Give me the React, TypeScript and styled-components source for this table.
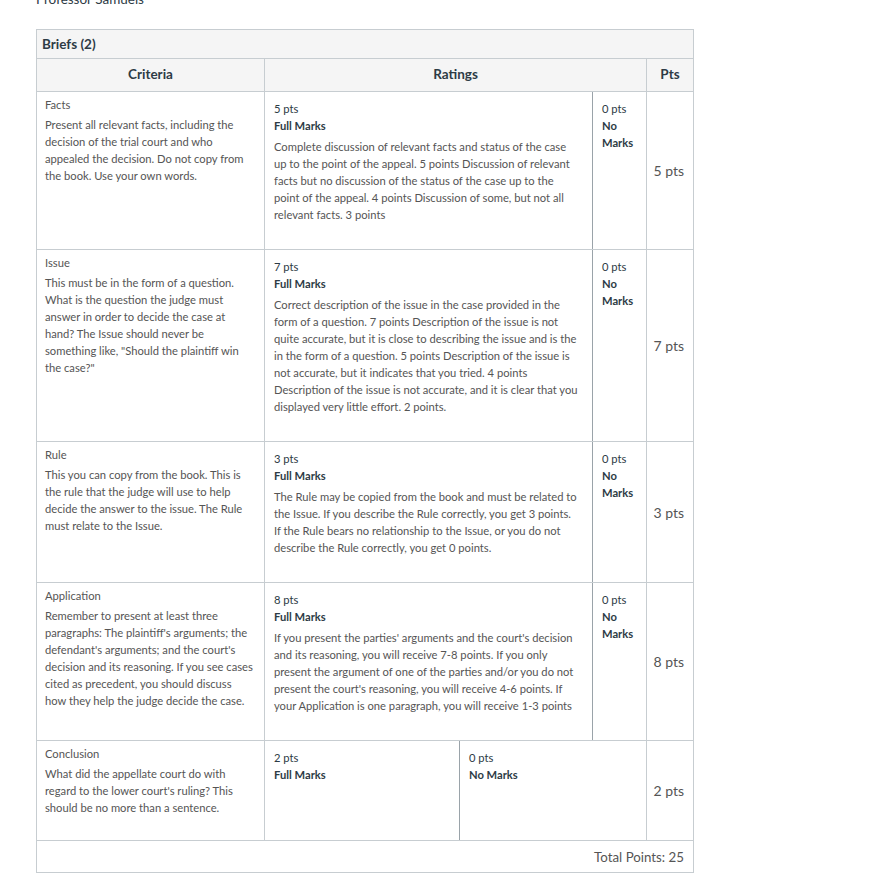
import React from "react";
import styled, { createGlobalStyle } from "styled-components";

const Global = createGlobalStyle`
  html, body { margin: 0; padding: 0; background: #ffffff; }
  body { font-family: "Lato", "Liberation Sans", sans-serif; overflow: hidden; }
`;

const Page = styled.div`
  padding: 0 0 0 36px;
  width: 658px;
`;

const Heading = styled.div`
  margin-top: -9px;
  font-size: 13.5px;
  line-height: 17px;
  color: #2d3b45;
  margin-bottom: 21px;
`;

const Rubric = styled.div`
  border: 1px solid #c7cdd1;
  width: 658px;
  box-sizing: border-box;
`;

const TitleBar = styled.div`
  height: 29px;
  box-sizing: border-box;
  background: #f5f5f5;
  border-bottom: 1px solid #c7cdd1;
  display: flex;
  align-items: center;
  padding-left: 5px;
  font-size: 13.5px;
  font-weight: 700;
  color: #2d3b45;
`;

const Row = styled.div`
  display: grid;
  grid-template-columns: 228px 382px 1fr;
  border-bottom: 1px solid #c7cdd1;
  &:last-child { border-bottom: none; }
`;

const HeadRow = styled(Row)`
  height: 33px;
  box-sizing: border-box;
  background: #f5f5f5;
`;

const HeadCell = styled.div<{ $last?: boolean }>`
  display: flex;
  align-items: center;
  justify-content: center;
  padding-bottom: 3px;
  font-size: 13.5px;
  font-weight: 700;
  color: #2d3b45;
  border-right: ${(p) => (p.$last ? "none" : "1px solid #c7cdd1")};
`;

const CriterionCell = styled.div`
  border-right: 1px solid #c7cdd1;
  padding: 4px 10px 24px 8px;
  font-size: 11.2px;
  line-height: 17px;
  color: #555555;
`;

const CriterionTitle = styled.div``;

const CriterionDesc = styled.div`
  margin-top: 3px;
`;

const RatingsCell = styled.div`
  border-right: 1px solid #c7cdd1;
  display: flex;
  align-items: stretch;
`;

const Tier = styled.div<{ $w: number; $divider?: boolean }>`
  box-sizing: border-box;
  flex: 0 0 ${(p) => p.$w}px;
  padding: 8px 13px 26px 9px;
  border-left: ${(p) => (p.$divider ? "1px solid #9aa3a9" : "none")};
  font-size: 11.2px;
  line-height: 17px;
`;

const TierPts = styled.div`
  color: #2d3b45;
`;

const TierLabel = styled.div`
  color: #2d3b45;
  font-weight: 700;
`;

const TierDesc = styled.div`
  margin-top: 4px;
  color: #555555;
`;

const PtsCell = styled.div`
  display: flex;
  align-items: center;
  justify-content: flex-end;
  padding-right: 9px;
  font-size: 14px;
  color: #555555;
`;

const TotalRow = styled.div`
  height: 31px;
  display: flex;
  align-items: center;
  justify-content: flex-end;
  padding-right: 9px;
  font-size: 13.3px;
  color: #555555;
`;

type Rating = { pts: string; label: string; desc?: string; w: number };
type Criterion = { title: string; desc: string; ratings: Rating[]; pts: string };

const criteria: Criterion[] = [
  {
    title: "Facts",
    desc: "Present all relevant facts, including the decision of the trial court and who appealed the decision. Do not copy from the book. Use your own words.",
    ratings: [
      {
        pts: "5 pts",
        label: "Full Marks",
        desc: "Complete discussion of relevant facts and status of the case up to the point of the appeal. 5 points Discussion of relevant facts but no discussion of the status of the case up to the point of the appeal. 4 points Discussion of some, but not all relevant facts. 3 points",
        w: 327,
      },
      { pts: "0 pts", label: "No Marks", w: 54 },
    ],
    pts: "5 pts",
  },
  {
    title: "Issue",
    desc: "This must be in the form of a question. What is the question the judge must answer in order to decide the case at hand? The Issue should never be something like, \"Should the plaintiff win the case?\"",
    ratings: [
      {
        pts: "7 pts",
        label: "Full Marks",
        desc: "Correct description of the issue in the case provided in the form of a question. 7 points Description of the issue is not quite accurate, but it is close to describing the issue and is the in the form of a question. 5 points Description of the issue is not accurate, but it indicates that you tried. 4 points Description of the issue is not accurate, and it is clear that you displayed very little effort. 2 points.",
        w: 327,
      },
      { pts: "0 pts", label: "No Marks", w: 54 },
    ],
    pts: "7 pts",
  },
  {
    title: "Rule",
    desc: "This you can copy from the book. This is the rule that the judge will use to help decide the answer to the issue. The Rule must relate to the Issue.",
    ratings: [
      {
        pts: "3 pts",
        label: "Full Marks",
        desc: "The Rule may be copied from the book and must be related to the Issue. If you describe the Rule correctly, you get 3 points. If the Rule bears no relationship to the Issue, or you do not describe the Rule correctly, you get 0 points.",
        w: 327,
      },
      { pts: "0 pts", label: "No Marks", w: 54 },
    ],
    pts: "3 pts",
  },
  {
    title: "Application",
    desc: "Remember to present at least three paragraphs: The plaintiff's arguments; the defendant's arguments; and the court's decision and its reasoning. If you see cases cited as precedent, you should discuss how they help the judge decide the case.",
    ratings: [
      {
        pts: "8 pts",
        label: "Full Marks",
        desc: "If you present the parties' arguments and the court's decision and its reasoning, you will receive 7-8 points. If you only present the argument of one of the parties and/or you do not present the court's reasoning, you will receive 4-6 points. If your Application is one paragraph, you will receive 1-3 points",
        w: 327,
      },
      { pts: "0 pts", label: "No Marks", w: 54 },
    ],
    pts: "8 pts",
  },
  {
    title: "Conclusion",
    desc: "What did the appellate court do with regard to the lower court's ruling? This should be no more than a sentence.",
    ratings: [
      { pts: "2 pts", label: "Full Marks", w: 194 },
      { pts: "0 pts", label: "No Marks", w: 187 },
    ],
    pts: "2 pts",
  },
];

export default function App() {
  return (
    <Page>
      <Global />
      <Heading>Professor Samuels</Heading>
      <Rubric>
        <TitleBar>Briefs (2)</TitleBar>
        <HeadRow>
          <HeadCell>Criteria</HeadCell>
          <HeadCell>Ratings</HeadCell>
          <HeadCell $last>Pts</HeadCell>
        </HeadRow>
        {criteria.map((c) => (
          <Row key={c.title}>
            <CriterionCell>
              <CriterionTitle>{c.title}</CriterionTitle>
              <CriterionDesc>{c.desc}</CriterionDesc>
            </CriterionCell>
            <RatingsCell>
              {c.ratings.map((r, i) => (
                <Tier key={i} $w={r.w} $divider={i > 0}>
                  <TierPts>{r.pts}</TierPts>
                  <TierLabel>{r.label}</TierLabel>
                  {r.desc && <TierDesc>{r.desc}</TierDesc>}
                </Tier>
              ))}
            </RatingsCell>
            <PtsCell>{c.pts}</PtsCell>
          </Row>
        ))}
        <TotalRow>Total Points: 25</TotalRow>
      </Rubric>
    </Page>
  );
}
